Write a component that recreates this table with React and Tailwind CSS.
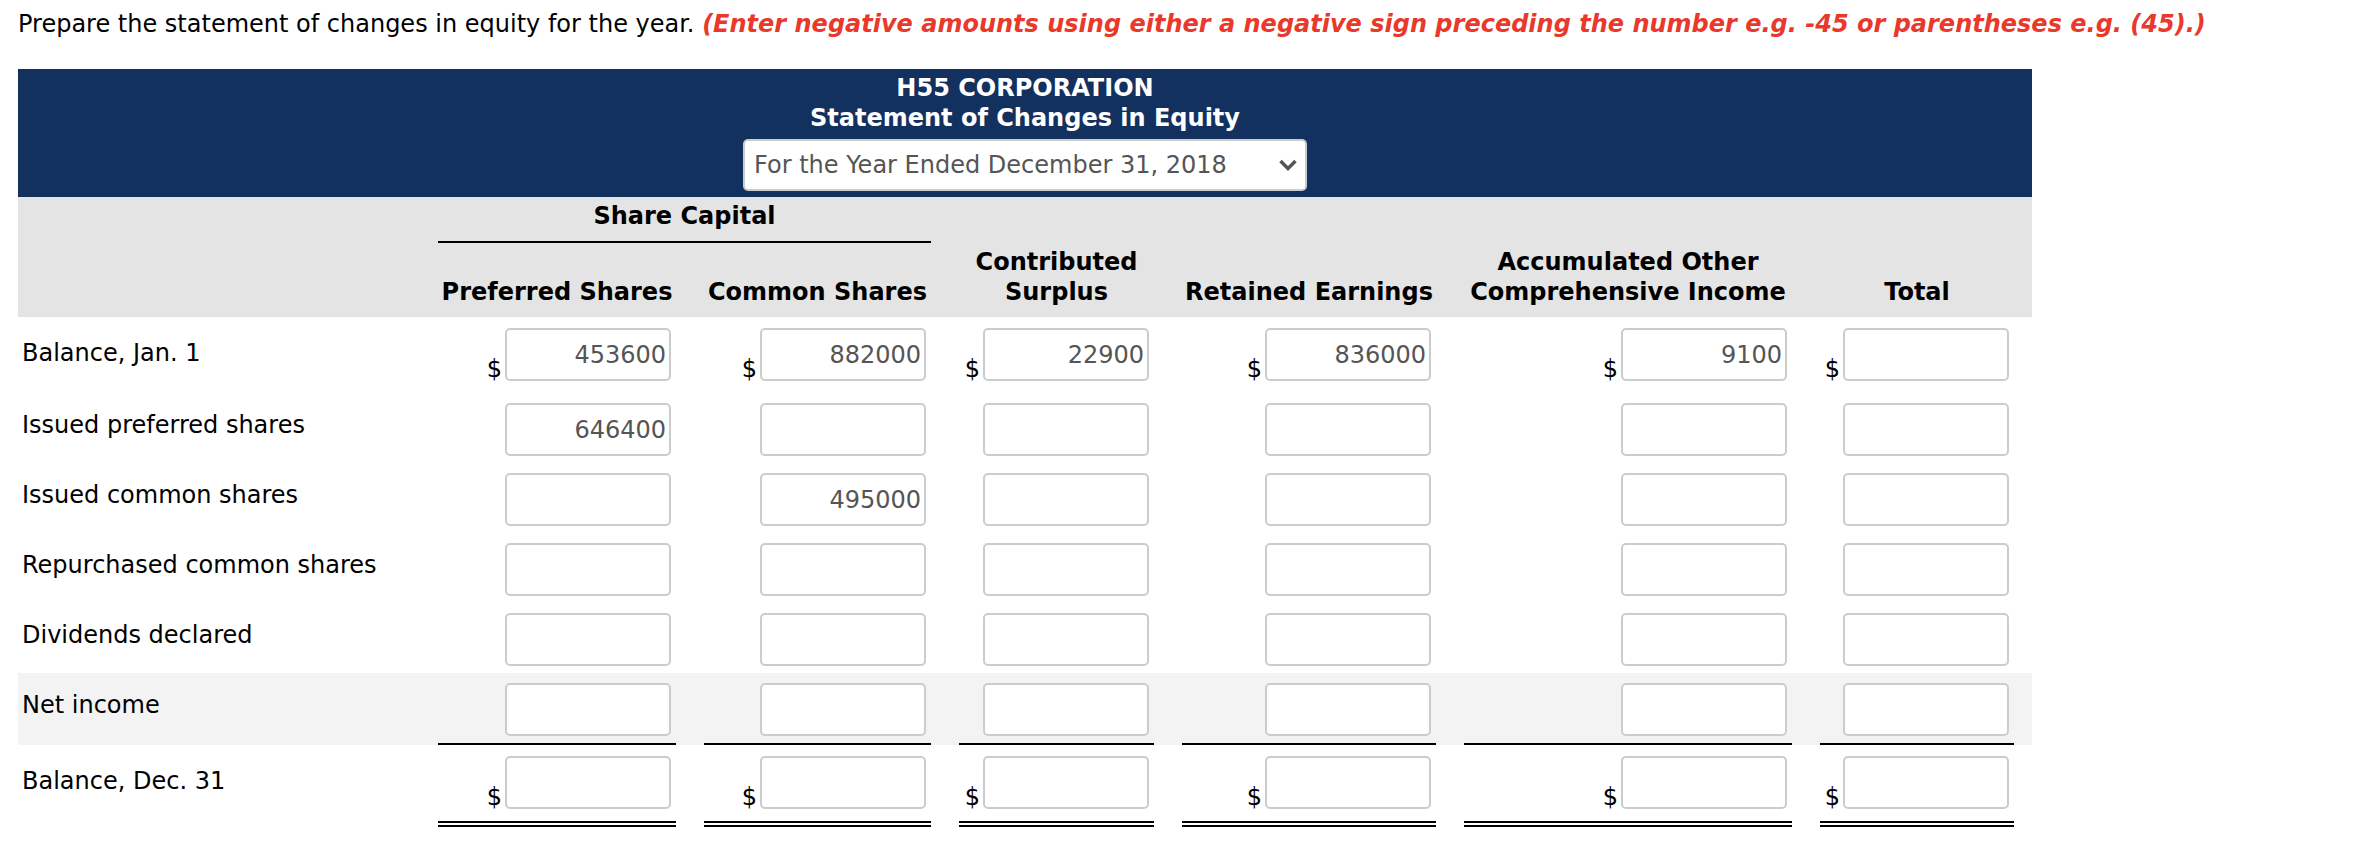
import React from "react";

const GRID =
  "grid grid-cols-[392px_238px_227px_195px_254px_328px_194px] gap-x-[28px] pr-[18px]";

const rows = [
  {
    label: "Balance, Jan. 1",
    values: ["453600", "882000", "22900", "836000", "9100", ""],
    dollar: true,
    kind: "first",
  },
  { label: "Issued preferred shares", values: ["646400", "", "", "", "", ""], kind: "mid" },
  { label: "Issued common shares", values: ["", "495000", "", "", "", ""], kind: "mid" },
  { label: "Repurchased common shares", values: ["", "", "", "", "", ""], kind: "mid" },
  { label: "Dividends declared", values: ["", "", "", "", "", ""], kind: "mid" },
  { label: "Net income", values: ["", "", "", "", "", ""], kind: "net" },
  { label: "Balance, Dec. 31", values: ["", "", "", "", "", ""], dollar: true, kind: "last" },
];

function Box({ value }) {
  return (
    <div className="w-[166px] h-[53px] shrink-0 bg-white border-2 border-[#cccccc] rounded-[5px] flex items-center justify-end pr-[3px] text-[#555555] leading-[28px]">
      {value}
    </div>
  );
}

function Cell({ value, dollar, kind }) {
  let cls = "self-start flex items-end justify-end pr-[5px]";
  if (kind === "first") cls += " pt-[11px]";
  if (kind === "mid") cls += " pt-[10px]";
  if (kind === "net") cls += " pt-[10px] pb-[7px] border-b-2 border-black";
  if (kind === "last") cls += " pt-[11px] pb-[12px] border-b-[6px] border-double border-black";
  return (
    <div className={cls}>
      {dollar && <span className="mr-[3px] leading-[24px] text-black">$</span>}
      <Box value={value} />
    </div>
  );
}

function Row({ row }) {
  let rowCls = GRID;
  if (row.kind === "first") rowCls += " h-[76px]";
  if (row.kind === "mid") rowCls += " h-[70px]";
  if (row.kind === "net") rowCls += " bg-[#f3f3f3]";
  const labelPt = row.dollar ? "pt-[22px]" : "pt-[18px]";
  return (
    <div className={rowCls}>
      <div className={`self-start pl-[4px] leading-[29px] whitespace-nowrap ${labelPt}`}>{row.label}</div>
      {row.values.map((v, i) => (
        <Cell key={i} value={v} dollar={row.dollar} kind={row.kind} />
      ))}
    </div>
  );
}

function Chevron() {
  return (
    <svg width="20" height="14" viewBox="0 0 20 14" className="shrink-0">
      <path d="M2.5 3 L10 10.5 L17.5 3" fill="none" stroke="#555555" strokeWidth="3.5" strokeLinecap="butt" strokeLinejoin="miter" />
    </svg>
  );
}

export default function App() {
  return (
    <div className="w-[2364px] min-h-[854px] bg-white text-black text-[24px] font-['DejaVu_Sans','Verdana',sans-serif]">
      <div className="pl-[18px] pt-[10px] leading-[29px] whitespace-nowrap">
        Prepare the statement of changes in equity for the year.{" "}
        <span className="font-bold italic text-[#e8392b]">
          (Enter negative amounts using either a negative sign preceding the number e.g. -45 or parentheses e.g. (45).)
        </span>
      </div>

      <div className="ml-[18px] mt-[30px] w-[2014px]">
        {/* Blue title header */}
        <div className="bg-[#13315f] pt-[4px] pb-[6px] text-white font-bold text-center">
          <div className="leading-[30px]">H55 CORPORATION</div>
          <div className="leading-[30px]">Statement of Changes in Equity</div>
          <div className="mx-auto mt-[6px] w-[564px] h-[52px] bg-white border-2 border-[#cccccc] rounded-[5px] flex items-center justify-between pl-[9px] pr-[7px] text-[#555555] font-normal leading-[28px]">
            <span>For the Year Ended December 31, 2018</span>
            <Chevron />
          </div>
        </div>

        {/* Gray column header */}
        <div className="bg-[#e4e4e4] font-bold text-center">
          <div className={`${GRID} pt-[5px]`}>
            <div />
            <div className="col-span-2 leading-[29px] pb-[10px] border-b-2 border-black">Share Capital</div>
          </div>
          <div className={`${GRID} items-end pt-[4px] pb-[10px] leading-[30px]`}>
            <div />
            <div className="whitespace-nowrap">Preferred Shares</div>
            <div className="whitespace-nowrap">Common Shares</div>
            <div>
              <div>Contributed</div>
              <div>Surplus</div>
            </div>
            <div className="whitespace-nowrap">Retained Earnings</div>
            <div className="whitespace-nowrap">
              <div>Accumulated Other</div>
              <div>Comprehensive Income</div>
            </div>
            <div>Total</div>
          </div>
        </div>

        {rows.map((r, i) => (
          <Row key={i} row={r} />
        ))}
      </div>
    </div>
  );
}
